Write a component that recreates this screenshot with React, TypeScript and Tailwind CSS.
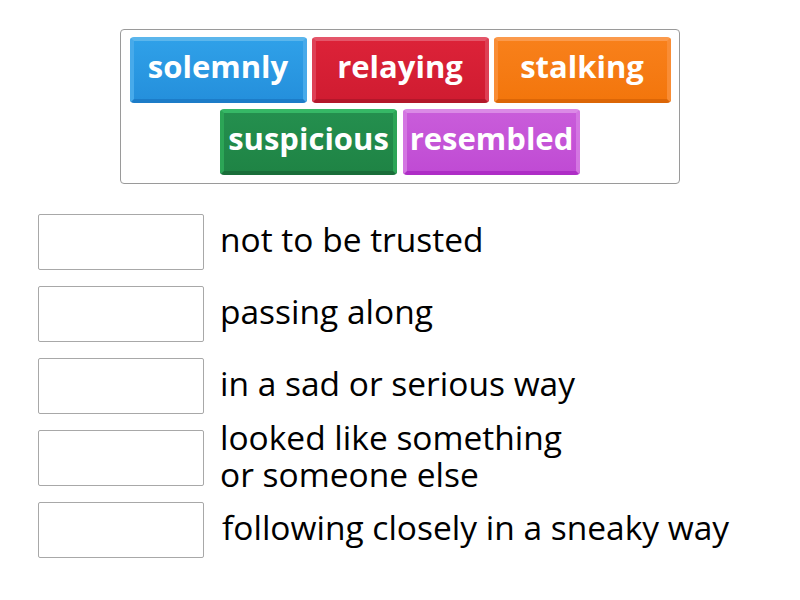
import React from "react";

const tiles = [
  { t: "solemnly", c: "bg-gradient-to-b from-[#2fa0e8] to-[#2590dc] border-t-[#5bb6ec] border-l-[#47aaea] border-r-[#47aaea] border-b-[#1c7cc8]" },
  { t: "relaying", c: "bg-gradient-to-b from-[#dc2238] to-[#d01c31] border-t-[#e4566a] border-l-[#de4055] border-r-[#de4055] border-b-[#b3172a]" },
  { t: "stalking", c: "bg-gradient-to-b from-[#f8801a] to-[#f3760c] border-t-[#fb9a4c] border-l-[#f98d35] border-r-[#f98d35] border-b-[#dc6606]" },
];
const tiles2 = [
  { t: "suspicious", c: "bg-gradient-to-b from-[#248f4e] to-[#1f8445] border-t-[#36b866] border-l-[#2ca556] border-r-[#2ca556] border-b-[#1a6e3a]" },
  { t: "resembled", c: "bg-gradient-to-b from-[#c95cda] to-[#c04bd4] border-t-[#db8ae6] border-l-[#d476e2] border-r-[#d476e2] border-b-[#ae2dc6]" },
];

function Tile({ t, c }: { t: string; c: string }) {
  return (
    <div
      className={`w-[177px] h-[66px] rounded-[4px] border-[4px] flex items-center justify-center text-white font-bold text-[31px] leading-none ${c}`}
    >
      <span className="-mt-[8px] whitespace-nowrap">{t}</span>
    </div>
  );
}

const rows: string[][] = [
  ["not to be trusted"],
  ["passing along"],
  ["in a sad or serious way"],
  ["looked like something", "or someone else"],
  ["following closely in a sneaky way"],
];

export default function App() {
  return (
    <div
      className="w-[800px] h-[600px] bg-white relative"
      style={{ fontFamily: '"Open Sans", sans-serif' }}
    >
      <div className="pt-[29px] flex justify-center">
        <div className="w-[560px] h-[155px] border border-[#9a9a9a] rounded-[4px] flex flex-col items-center gap-[6px] pt-[7px]">
          <div className="flex gap-[5px]">
            {tiles.map((x) => (
              <Tile key={x.t} {...x} />
            ))}
          </div>
          <div className="flex gap-[6px]">
            {tiles2.map((x) => (
              <Tile key={x.t} {...x} />
            ))}
          </div>
        </div>
      </div>
      <div className="mt-[30px] ml-[38px] flex flex-col gap-[16px]">
        {rows.map((r, i) => (
          <div key={i} className="flex items-center gap-[16px] h-[56px]">
            <div className="w-[166px] h-[56px] border border-[#a8a8a8] rounded-[2px] shrink-0" />
            <p className={`text-[33.5px] text-black leading-[37px] -mt-[5px] whitespace-nowrap ${i === 4 ? "ml-[2px]" : ""}`}>
              {r.length === 2 ? (
                <>
                  {r[0]}
                  <br />
                  {"\u2009" === "" ? "" : ""}
                  {r[1]}
                </>
              ) : (
                r[0]
              )}
            </p>
          </div>
        ))}
      </div>
    </div>
  );
}
